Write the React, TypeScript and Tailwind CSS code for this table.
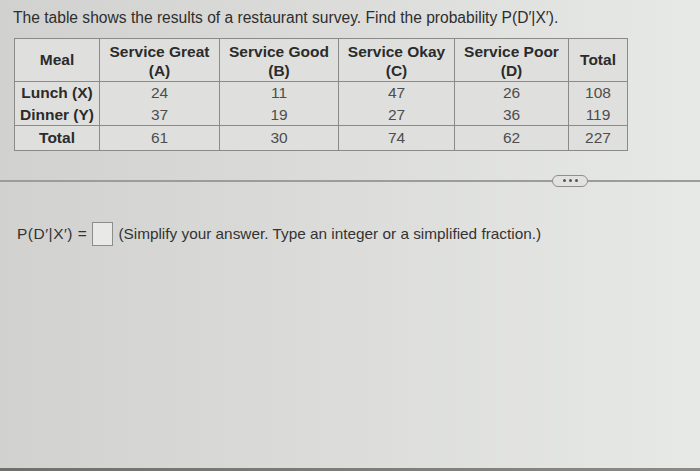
import React from "react";

const cols = [
  { title: "Service Great", code: "(A)", w: "w-[120px]" },
  { title: "Service Good", code: "(B)", w: "w-[119px]" },
  { title: "Service Okay", code: "(C)", w: "w-[116px]" },
  { title: "Service Poor", code: "(D)", w: "w-[114px]" },
];

const rows = [
  { label: "Lunch (X)", values: [24, 11, 47, 26], total: 108 },
  { label: "Dinner (Y)", values: [37, 19, 27, 36], total: 119 },
];

const totals = [61, 30, 74, 62, 227];

export default function App() {
  return (
    <div
      className="flex flex-col h-[471px] w-[700px] overflow-hidden bg-linear-to-r from-[#d1d2cf] via-[#dcdddb] to-[#e7e9e7] text-[#2e2e2e]"
      style={{ fontFamily: '"Liberation Sans", Arial, sans-serif' }}
    >
      <div className="pt-[9px] pl-[13px]">
        <p className="text-[15.6px] leading-[18px]">
          The table shows the results of a restaurant survey. Find the probability P(D′|X′).
        </p>

        <table className="mt-[11px] ml-px table-fixed border-collapse border-[1.5px] border-[#858683] bg-[#dfe0dd] text-[15.5px]">
          <thead>
            <tr className="h-[42px]">
              <th className="w-[85px] border border-[#8a8b88] font-bold text-[#2b2b2b] align-middle">Meal</th>
              {cols.map((c) => (
                <th
                  key={c.code}
                  className={`${c.w} border border-[#8a8b88] pt-[3px] pb-px font-bold leading-[19px] text-[#2b2b2b]`}
                >
                  {c.title}
                  <br />
                  {c.code}
                </th>
              ))}
              <th className="w-[59px] border border-[#8a8b88] font-bold text-[#2b2b2b]">Total</th>
            </tr>
          </thead>
          <tbody>
            {rows.map((r, i) => (
              <tr key={r.label} className={i === 0 ? "h-[23px]" : "h-[20px]"}>
                <td className="border-x border-[#8a8b88] text-center font-bold leading-[20px] text-[#2b2b2b]">
                  {r.label}
                </td>
                {r.values.map((v, j) => (
                  <td key={j} className="border-x border-[#8a8b88] text-center leading-[20px] text-[#4d4d4d]">
                    {v}
                  </td>
                ))}
                <td className="border-x border-[#8a8b88] text-center leading-[20px] text-[#4d4d4d]">{r.total}</td>
              </tr>
            ))}
            <tr className="h-[25px]">
              <td className="border border-[#8a8b88] text-center font-bold text-[#2b2b2b]">Total</td>
              {totals.map((t, j) => (
                <td key={j} className="border border-[#8a8b88] text-center text-[#4d4d4d]">
                  {t}
                </td>
              ))}
            </tr>
          </tbody>
        </table>
      </div>

      {/* divider with the more-options pill */}
      <div className="mt-[24px] flex h-[12px] items-center">
        <div className="h-[2px] flex-1 bg-[#9c9d9a]" />
        <div className="flex h-[12px] w-[36px] items-center justify-center gap-[3px] rounded-full border-[1.5px] border-[#8e8f8c] bg-[#e2e3e1]">
          <span className="h-[3px] w-[3px] rounded-full bg-[#555]" />
          <span className="h-[3px] w-[3px] rounded-full bg-[#555]" />
          <span className="h-[3px] w-[3px] rounded-full bg-[#555]" />
        </div>
        <div className="h-[2px] w-[112px] bg-[#9c9d9a]" />
      </div>

      <div className="mt-[35px] flex h-[24px] items-center pl-[17px] text-[15.5px] leading-[22px] text-[#333]">
        <span className="tracking-[0.5px]">P(D′|X′) =</span>
        <span className="ml-[5px] h-[24px] w-[21px] border border-[#8d8e8b] bg-[#e9eae8]" />
        <span className="ml-[5px] text-[15.35px]">(Simplify your answer. Type an integer or a simplified fraction.)</span>
      </div>

      <div className="flex-1" />
      <div className="h-[3px] bg-linear-to-r from-[#6f706e] to-[#8a8b89]" />
    </div>
  );
}
